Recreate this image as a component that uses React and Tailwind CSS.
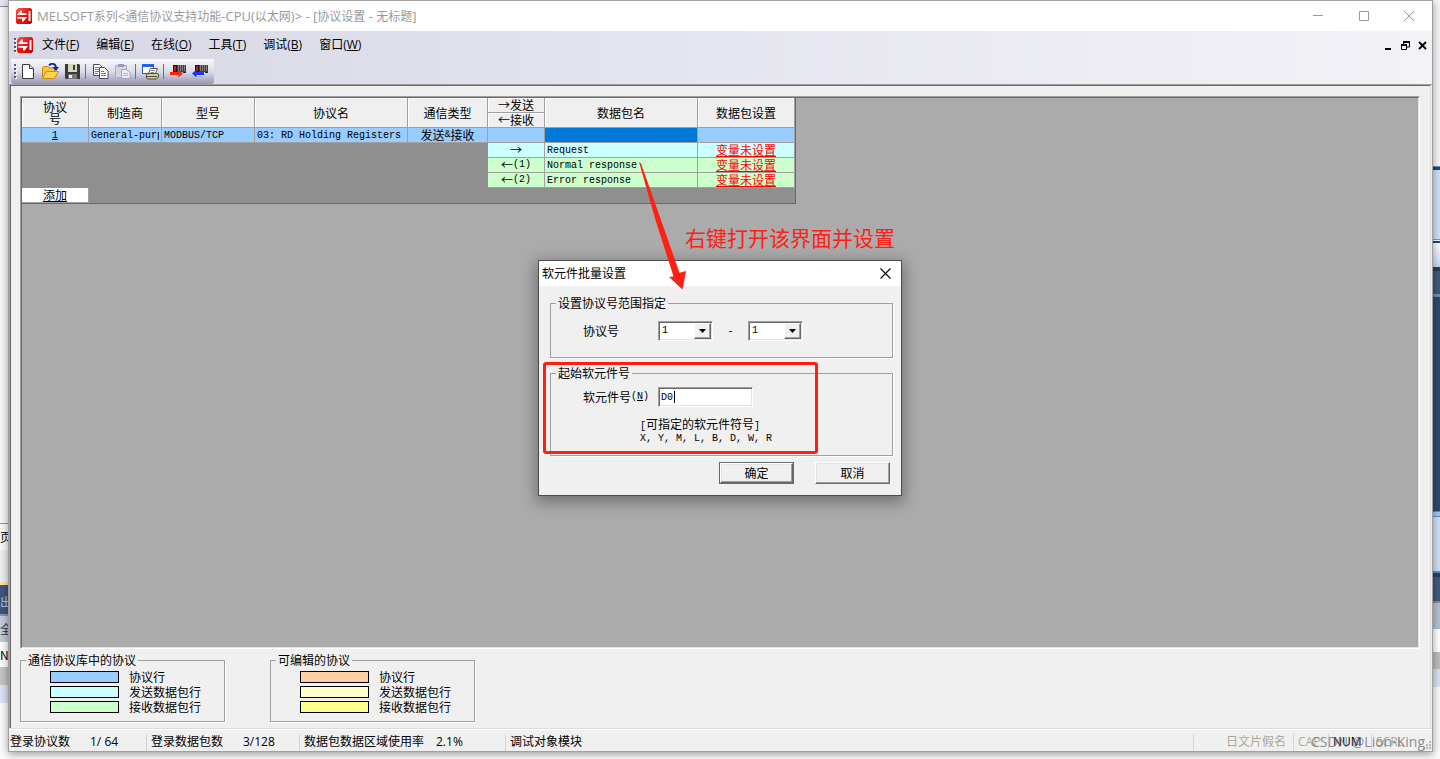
import React from "react";

const UI = "font-['Open_Sans','Noto_Sans_CJK_SC',sans-serif]";
const CJK = "font-['Noto_Sans_CJK_SC',sans-serif]";
const MONO = "font-['Liberation_Mono','Noto_Sans_CJK_SC',monospace] text-[10px]";

function AppIcon() {
  return (
    <svg width="17" height="16" viewBox="0 0 17 16" aria-hidden="true">
      <defs>
        <linearGradient id="appRed" x1="0" y1="0" x2="1" y2="1">
          <stop offset="0" stopColor="#ff5a50" />
          <stop offset="0.5" stopColor="#ee1111" />
          <stop offset="1" stopColor="#b80808" />
        </linearGradient>
      </defs>
      <path d="M2 0H15V1H16V15H15V16H1V15H0V2H1V1H2Z" fill="url(#appRed)" />
      <path d="M1 7L4.500 2.500H6V5.200H10.500V7Z" fill="#fff" />
      <path d="M1.500 9H11L7.500 13.500H6V10.800H1.500Z" fill="#fff" />
      <path d="M12.500 3H14.500V13H12.500Z" fill="#fff" />
    </svg>
  );
}

function Grip() {
  return (
    <svg width="3" height="15" viewBox="0 0 3 15" aria-hidden="true" className="shrink-0">
      {[0, 4, 8, 12].map((y) => (
        <g key={y}>
          <rect x="1" y={y + 1} width="2" height="2" fill="#fff" />
          <rect x="0" y={y} width="2" height="2" fill="#55547a" />
        </g>
      ))}
    </svg>
  );
}

const svgProps = { width: 17, height: 17, viewBox: "0 0 17 17", "aria-hidden": true };

const NewIcon = () => (
  <svg {...svgProps}>
    <path d="M2.500 1.500H9.500L13.500 5.500V15.500H2.500Z" fill="#fff" stroke="#3c3c3c" />
    <path d="M9.500 1.500V5.500H13.500" fill="#ddd" stroke="#3c3c3c" />
  </svg>
);
const OpenIcon = () => (
  <svg {...svgProps}>
    <path d="M0.5 14.5V4.5L1.5 3.5H5.5L7 5H12.5V8" fill="#f4c63c" stroke="#c48a0c" />
    <path d="M0.5 15.5L4 8.5H16.5L12.5 15.5Z" fill="#ffd34e" stroke="#c98d10" />
    <path d="M7 2.5C9 0 13 0 14 4" fill="none" stroke="#0c2ca0" strokeWidth="2" />
    <path d="M10.5 4H17L14 8Z" fill="#0c2ca0" />
  </svg>
);
const SaveIcon = () => (
  <svg {...svgProps}>
    <path d="M1 1H15L16 2V16H2L1 15Z" fill="#3a3a3a" />
    <rect x="4" y="1" width="9" height="8" fill="#d9d7c0" />
    <rect x="9" y="2" width="2" height="5" fill="#3a3a3a" />
    <rect x="4" y="11" width="9" height="5" fill="#777" />
    <rect x="5" y="12" width="3" height="3" fill="#eee" />
  </svg>
);
const CopyIcon = () => (
  <svg {...svgProps}>
    <path d="M1.5 1.5H7.5L10.5 4.5V12.5H1.5Z" fill="#fff" stroke="#4a4a5a" />
    <path d="M3 4.5H7M3 6.5H7M3 8.5H7M3 10.5H6" stroke="#777" />
    <path d="M7.5 4.5H12.5L16 8V15.5H7.5Z" fill="#fff" stroke="#4a4a5a" />
    <path d="M9 8.5H12M9 10.5H14M9 12.5H14" stroke="#777" />
  </svg>
);
const PasteIcon = () => (
  <svg {...svgProps}>
    <path d="M1.5 2.5H12.5V14.5H1.5Z" fill="#d4d4e2" stroke="#a9a9c0" />
    <rect x="4" y="1" width="6" height="3" fill="#9c9cb6" />
    <path d="M7.5 6.5H12.5L16 9.5V15.5H7.5Z" fill="#ececf4" stroke="#a2a2bc" />
    <path d="M9 10.5H14M9 12.5H14" stroke="#b4b4c8" />
  </svg>
);
const PrintIcon = () => (
  <svg {...svgProps}>
    <path d="M0.5 1.5H11.5V10.5H0.5Z" fill="#fff" stroke="#2457b8" />
    <rect x="0" y="1" width="12" height="3" fill="#1d66e0" />
    <path d="M8.500 5.500H15.500L13 11.500H6Z" fill="#fff" stroke="#555" />
    <path d="M9 7.500H13M8.500 9.500H12" stroke="#888" />
    <path d="M4.500 11.500L6 10.500H14.500L16.500 11V14L14.500 16H5.500L4.500 15Z" fill="#d2c99a" stroke="#55513c" />
    <path d="M5 13.500H15" stroke="#55513c" />
  </svg>
);
function TransferIcon({ read }) {
  return (
    <svg {...svgProps}>
      <rect x="3" y="2" width="13" height="7" fill="#463c3c" />
      <rect x="3" y="2" width="4" height="7" fill="#1c1212" />
      <rect x="4" y="3" width="2" height="5" fill="#c81818" />
      <path d="M8.500 2V8M10.500 2V8M12.500 2V8M14.500 2V8" stroke="#857c7c" />
      <path d="M13 9H16V10H13Z" fill="#2c2424" />
      {read ? (
        <path d="M0 10.500L4.500 6.500V9H12V12H4.500V14.500Z" fill="#1438ff" />
      ) : (
        <path d="M13 10.500L8.500 6.500V9H0V12H8.500V14.500Z" fill="#ff2414" />
      )}
    </svg>
  );
}

const tools = [
  ["新建", NewIcon],
  ["打开", OpenIcon],
  ["保存", SaveIcon],
  null,
  ["复制", CopyIcon],
  ["粘贴", PasteIcon],
  null,
  ["打印", PrintIcon],
  null,
  ["写入", () => <TransferIcon />],
  ["读取", () => <TransferIcon read />],
];

const menus = [
  ["文件", "F"],
  ["编辑", "E"],
  ["在线", "O"],
  ["工具", "T"],
  ["调试", "B"],
  ["窗口", "W"],
];

function Strip({ parts, className }) {
  return (
    <div className={`flex shrink-0 flex-col overflow-hidden ${className}`} aria-hidden="true">
      {parts.map(([cls, text], i) => (
        <div key={i} className={`shrink-0 overflow-hidden whitespace-nowrap text-[12px] ${cls}`}>
          {text}
        </div>
      ))}
    </div>
  );
}

const leftParts = [
  ["h-1.5 bg-[#e4e4ee]"],
  ["h-px bg-[#8a8a98]"],
  ["h-[516px] bg-[#f7f7f7]"],
  ["h-px bg-[#8e93a8]"],
  ["h-[26px] bg-[#fafafa] leading-[26px]", "页"],
  ["h-8 bg-[#efefef]"],
  ["h-[3px] bg-[#ffe49a]"],
  ["h-[29px] bg-[#40557c] leading-[34px] text-[#a8c8f4]", "出"],
  ["h-[2px] bg-[#8c94a4]"],
  ["h-[26px] bg-[#c0cbdd] leading-[26px] text-[#333]", "全"],
  ["h-[25px] bg-white leading-[25px]", "No"],
  ["h-[18px] bg-[#c4c4c4]"],
  ["h-[18px] bg-[#dde3f8]"],
  ["h-14 bg-[#fcfcfc]"],
];
const rightParts = [
  ["h-[166px] bg-[#f6f6f6]"],
  ["h-1 bg-[#2e4469] border-t border-[#5b94d8]"],
  ["h-[69px] bg-[#cfe0f6]"],
  ["h-px bg-[#6c9cd4]"],
  ["h-px bg-white"],
  ["h-[2px] bg-[#0c46a8]"],
  ["h-[24px] bg-linear-to-b from-white to-[#c4d8f4]"],
  ["h-[27px] bg-[#43587e] border-t-4 border-[#2b3c5c]"],
  ["h-[2px] bg-[#8d8d8d]"],
  ["h-[215px] bg-[#314870] border-t border-[#5b8ccc]"],
  ["h-[6px] bg-[#9fc6f8] border-y border-[#5b8ccc]"],
  ["h-[54px] bg-[#cfe0f6]"],
  ["h-[2px] bg-[#5b8ccc]"],
  ["h-[28px] bg-[#43587e] border-t-4 border-[#2b3c5c]"],
  ["h-[2px] bg-[#8d8d8d]"],
  ["h-[26px] bg-[#b4c0d4]"],
  ["h-[23px] bg-white"],
  ["h-[17px] bg-[#bdbdbd]"],
  ["h-[18px] bg-[#d8e0f6]"],
  ["h-[72px] bg-[#fafafa]"],
];

const th =
  "border-b border-r border-[#a0a0a0] bg-[#efefef] p-0 text-center align-middle font-normal text-[12px] shadow-[inset_1px_1px_0_#fff]";
const cell = "h-[15px] border-b border-r border-[#a0a0a0] p-0 align-middle overflow-hidden whitespace-nowrap";
const mono = `${MONO} block h-[14px] overflow-hidden leading-[16px]`;

function PacketRow({ arrow, index, name, tone }) {
  return (
    <tr>
      <td colSpan={5} className="p-0" />
      <td className={`${cell} ${tone} text-center`}>
        <span className="flex h-[14px] items-center justify-center leading-[14px]">
          {arrow}
          <span className={MONO}>{index}</span>
        </span>
      </td>
      <td className={`${cell} ${tone} pl-[2px]`}>
        <span className={mono}>{name}</span>
      </td>
      <td className={`${cell} ${tone} text-center`}>
        <a href="#variables" className="block h-[14px] leading-[14px] text-[#ff0000] underline">
          变量未设置
        </a>
      </td>
    </tr>
  );
}

function ProtocolTable() {
  return (
    <table className="w-[774px] table-fixed border-separate border-spacing-0 border-b border-r border-[#696969] bg-[#8f8f8f] text-[12px] leading-[14px]">
      <colgroup>
        <col className="w-[67px]" />
        <col className="w-[73px]" />
        <col className="w-[93px]" />
        <col className="w-[153px]" />
        <col className="w-[80px]" />
        <col className="w-[57px]" />
        <col className="w-[153px]" />
        <col />
      </colgroup>
      <thead>
        <tr>
          <th rowSpan={2} className={`${th} leading-[12px]`}>
            协议
            <br />号
          </th>
          <th rowSpan={2} className={th}>制造商</th>
          <th rowSpan={2} className={th}>型号</th>
          <th rowSpan={2} className={th}>协议名</th>
          <th rowSpan={2} className={th}>通信类型</th>
          <th className={`${th} h-[15px]`}>→发送</th>
          <th rowSpan={2} className={th}>数据包名</th>
          <th rowSpan={2} className={th}>数据包设置</th>
        </tr>
        <tr>
          <th className={`${th} h-[15px]`}>←接收</th>
        </tr>
      </thead>
      <tbody>
        <tr className="bg-[#99ccff]">
          <td className={`${cell} text-center`}>
            <span className={`${mono} underline`}>1</span>
          </td>
          <td className={`${cell} px-[2px]`}>
            <span className={mono}>General-purpose</span>
          </td>
          <td className={`${cell} pl-[2px]`}>
            <span className={mono}>MODBUS/TCP</span>
          </td>
          <td className={`${cell} pl-[2px]`}>
            <span className={mono}>03: RD Holding Registers</span>
          </td>
          <td className={`${cell} text-center`}>
            <span className="flex h-[14px] items-center justify-center">
              发送<span className={MONO}>&amp;</span>接收
            </span>
          </td>
          <td className={cell} />
          <td className={`${cell} bg-[#0078d7]`} />
          <td className={cell} />
        </tr>
        <PacketRow arrow="→" name="Request" tone="bg-[#ccffff]" />
        <PacketRow arrow="←" index="(1)" name="Normal response" tone="bg-[#ccffcc]" />
        <PacketRow arrow="←" index="(2)" name="Error response" tone="bg-[#ccffcc]" />
        <tr>
          <td className={`${cell} bg-white text-center`}>
            <a href="#add" className="block h-[14px] leading-[14px] underline">
              添加
            </a>
          </td>
          <td colSpan={7} className="p-0" />
        </tr>
      </tbody>
    </table>
  );
}

const box = "border border-[#a0a0a0] shadow-[1px_1px_0_#fff] p-0";
const legendCls = "ml-[5px] px-[2px] text-[12px] leading-[12px]";

function LegendGroup({ title, rows }) {
  return (
    <fieldset className={`${box} h-[68px] w-[205px]`}>
      <legend className={legendCls}>{title}</legend>
      <ul className="mt-[3px] pl-[29px]">
        {rows.map(([swatch, label]) => (
          <li key={label} className="flex h-[15px] items-center gap-2.5 text-[12px] leading-[15px]">
            <span className={`h-3 w-[69px] border border-black ${swatch}`} />
            {label}
          </li>
        ))}
      </ul>
    </fieldset>
  );
}

const sunken =
  "border border-t-[#a0a0a0] border-l-[#a0a0a0] border-r-white border-b-white bg-white shadow-[inset_1px_1px_0_#696969,inset_-1px_-1px_0_#e3e3e3]";

function NumberSelect({ id, label }) {
  return (
    <span className={`relative block h-5 w-[55px] ${sunken}`}>
      <select
        id={id}
        aria-label={label}
        defaultValue="1"
        className={`${MONO} block h-full w-full appearance-none bg-transparent pl-[3px] leading-[18px] outline-none`}
      >
        <option>1</option>
      </select>
      <span className="pointer-events-none absolute top-px right-px flex h-4 w-[17px] items-center justify-center border border-t-white border-l-white border-r-[#696969] border-b-[#696969] bg-[#f0f0f0] shadow-[inset_-1px_-1px_0_#a0a0a0]">
        <svg width="7" height="4" viewBox="0 0 7 4" aria-hidden="true">
          <path d="M0 0H7L3.5 4Z" />
        </svg>
      </span>
    </span>
  );
}

const raised =
  "border border-t-white border-l-white border-r-[#696969] border-b-[#696969] bg-[#f0f0f0] shadow-[inset_-1px_-1px_0_#a0a0a0,inset_1px_1px_0_#e3e3e3]";

function DeviceDialog() {
  return (
    <section
      role="dialog"
      aria-label="软元件批量设置"
      className={`absolute top-[260px] left-[538px] z-20 w-[364px] border border-[#4c4c4c] bg-[#f0f0f0] pb-[11px] text-[12px] shadow-[0_4px_14px_2px_rgba(0,0,0,0.35)] ${CJK}`}
    >
      <header className="flex h-[25px] items-center justify-between bg-white pr-[9px] pl-[3px]">
        <h2 className="pb-[2px] leading-[14px]">软元件批量设置</h2>
        <button aria-label="关闭" className="p-px">
          <svg width="11" height="11" viewBox="0 0 11 11" aria-hidden="true">
            <path d="M0.5 0.5L10.5 10.5M10.5 0.5L0.5 10.5" stroke="#000" strokeWidth="1.1" />
          </svg>
        </button>
      </header>
      <form className="mt-[11px] pr-2 pl-[11px]" onSubmit={(e) => e.preventDefault()}>
        <fieldset className={`${box} h-[61px]`}>
          <legend className={legendCls}>设置协议号范围指定</legend>
          <div className="mt-3 flex items-center pl-8">
            <label htmlFor="from" className="w-[75px] leading-[14px]">协议号</label>
            <NumberSelect id="from" label="起始协议号" />
            <span className={`${MONO} w-[35px] text-center`}>-</span>
            <NumberSelect id="to" label="结束协议号" />
          </div>
        </fieldset>
        <fieldset className={`${box} mt-[9px] h-[89px]`}>
          <legend className={legendCls}>起始软元件号</legend>
          <div className="mt-2 flex items-center pl-8">
            <label htmlFor="device" className="flex w-[75px] items-center leading-[14px]">
              软元件号
              <span className={MONO}>
                (<u>N</u>)
              </span>
            </label>
            <span className={`relative block h-5 w-[95px] ${sunken}`}>
              <input
                id="device"
                defaultValue="D0"
                className={`${MONO} block h-full w-full bg-transparent pl-[2px] outline-none`}
              />
              <span className="absolute top-[3px] left-[15px] h-3 w-px bg-black" />
            </span>
          </div>
          <p className="mt-2.5 pl-[89px] leading-[13px]">
            <span className={MONO}>[</span>可指定的软元件符号<span className={MONO}>]</span>
          </p>
          <p className={`${MONO} pl-[89px] leading-[11px]`}>X, Y, M, L, B, D, W, R</p>
        </fieldset>
        <div className="mt-1.5 flex justify-end gap-[21px] pr-[3px]">
          <button type="submit" className="h-[22px] w-[75px] border border-[#696969]">
            <span className={`flex h-full items-center justify-center leading-[14px] ${raised}`}>确定</span>
          </button>
          <button type="button" className={`h-[22px] w-[75px] leading-[14px] ${raised}`}>
            取消
          </button>
        </div>
      </form>
    </section>
  );
}

function Annotations() {
  return (
    <div className="pointer-events-none absolute inset-0 z-30">
      <svg className="absolute top-0 left-0" width="1000" height="500" viewBox="0 0 1000 500" aria-hidden="true">
        <path d="M639 162L641 163.500L661 220L679.500 272.800L686 271L682.500 289.500L669 277L673.500 276.500L655.500 220Z" fill="#ff2015" />
      </svg>
      <p className="absolute top-[224px] left-[685px] text-[21px] leading-[26px] text-[#ff2015]">
        右键打开该界面并设置
      </p>
      <div className="absolute top-[362px] left-[543px] h-[92px] w-[275px] rounded-[3px] border-3 border-[#ff2015]" />
      <p className="absolute right-[15px] bottom-[7px] font-['Open_Sans',sans-serif] text-[14px] leading-[20px] text-[#707070]/80">
        CSDN @Lion-King
      </p>
    </div>
  );
}

const pane = "flex items-center border-[#d4d4d4] h-[17px]";

export default function App() {
  return (
    <div className={`relative flex h-screen overflow-hidden bg-[#fafafa] text-black ${CJK}`}>
      <Strip parts={leftParts} className="w-2" />
      <div className="relative z-10 mb-[7px] flex min-w-0 flex-1 flex-col border border-l border-[#a0a0a0] bg-[#f0f0f0] shadow-[0_2px_8px_rgba(0,0,0,0.4)]">
        <header className={`flex h-[30px] shrink-0 items-center bg-white pl-[7px] ${UI}`}>
          <AppIcon />
          <h1 className="ml-1 flex-1 text-[13px] leading-[16px] text-[#999]">
            MELSOFT<span className="text-[12px]">系列</span>&lt;
            <span className="text-[12px]">通信协议支持功能</span>-CPU(
            <span className="text-[12px]">以太网</span>)&gt; - [<span className="text-[12px]">协议设置</span> -{" "}
            <span className="text-[12px]">无标题</span>]
          </h1>
          <button aria-label="最小化" className="flex h-full w-[46px] items-center justify-center">
            <svg width="10" height="10" viewBox="0 0 10 10"><path d="M0 4.500H10" stroke="#999" /></svg>
          </button>
          <button aria-label="最大化" className="flex h-full w-[45px] items-center justify-center">
            <svg width="10" height="10" viewBox="0 0 10 10"><path d="M0.5 0.5H9.5V9.5H0.5Z" fill="none" stroke="#999" /></svg>
          </button>
          <button aria-label="关闭窗口" className="flex h-full w-[46px] items-center justify-center">
            <svg width="10" height="10" viewBox="0 0 10 10"><path d="M0 0L10 10M10 0L0 10" stroke="#999" /></svg>
          </button>
        </header>

        <div className="h-[53px] shrink-0 bg-linear-to-r from-[#d7d7e5] via-[#e6e6f0] to-[#f3f2f7]">
          <nav className={`flex h-7 items-center pl-[5px] ${UI}`}>
            <Grip />
            <AppIcon />
            <div className="ml-2 flex flex-1 gap-[17px] text-[12px] leading-[16px]">
              {menus.map(([name, key]) => (
                <button key={key}>
                  {name}(<u>{key}</u>)
                </button>
              ))}
            </div>
            <div className="flex items-center gap-2 pr-[5px]">
              <button aria-label="最小化文档">
                <svg width="9" height="9" viewBox="0 0 9 9"><path d="M1 7H7V9H1Z" /></svg>
              </button>
              <button aria-label="还原文档">
                <svg width="9" height="9" viewBox="0 0 9 9">
                  <path d="M2.500 3V1H8.500V6H6" fill="none" stroke="#000" />
                  <path d="M2 0H9V2H2ZM0 3H6V5H0Z" />
                  <path d="M0.500 3.500H5.500V8.500H0.500Z" fill="none" stroke="#000" />
                </svg>
              </button>
              <button aria-label="关闭文档">
                <svg width="9" height="9" viewBox="0 0 9 9"><path d="M1 1L8 8M8 1L1 8" stroke="#000" strokeWidth="1.800" /></svg>
              </button>
            </div>
          </nav>
          <div className="ml-[2px] flex h-[25px] w-fit items-center rounded-b-[3px] bg-linear-to-b from-[#f8f8fc] via-[#dcdce9] to-[#9897b8] pr-[3px] pl-[3px]">
            <Grip />
            <div className="flex items-center">
              {tools.map((tool, i) => {
                if (!tool) return <span key={i} className="mr-[3px] ml-[2px] h-[15px] w-px bg-[#6e6d92]" />;
                const [label, Icon] = tool;
                return (
                  <button key={i} aria-label={label} className="flex w-[22px] justify-center">
                    <Icon />
                  </button>
                );
              })}
            </div>
          </div>
        </div>

        <main className="flex min-h-0 flex-1 flex-col border-t border-l border-[#a0a0a0] pr-px">
          <div className="flex min-h-0 flex-1 flex-col border-t border-r border-l border-t-[#696969] border-r-[#e3e3e3] border-l-[#696969] pt-2.5 pr-[10px] pb-[7px] pl-[9px]">
            <div className="min-h-0 flex-1 border border-t-[#a0a0a0] border-l-[#a0a0a0] border-r-white border-b-white">
              <div className="h-full border border-t-[#696969] border-l-[#696969] border-r-[#e3e3e3] border-b-[#e3e3e3] bg-[#ababab]">
                <ProtocolTable />
              </div>
            </div>
            <div className="mt-[5px] flex gap-[45px]">
              <LegendGroup
                title="通信协议库中的协议"
                rows={[
                  ["bg-[#99ccff]", "协议行"],
                  ["bg-[#ccffff]", "发送数据包行"],
                  ["bg-[#ccffcc]", "接收数据包行"],
                ]}
              />
              <LegendGroup
                title="可编辑的协议"
                rows={[
                  ["bg-[#ffcfa5]", "协议行"],
                  ["bg-[#ffffcc]", "发送数据包行"],
                  ["bg-[#ffff8c]", "接收数据包行"],
                ]}
              />
            </div>
          </div>
        </main>

        <footer className={`flex h-[22px] shrink-0 items-center border-t border-white pt-[3px] text-[12px] leading-[16px] whitespace-nowrap shadow-[0_-1px_0_#dcdcdc] ${UI}`}>
          <div className={`${pane} w-[138px] border-r pl-px`}>
            <span className="w-20">登录协议数</span>
            <span>1/ 64</span>
          </div>
          <div className={`${pane} w-[153px] border-r pl-1`}>
            <span className="w-[92px]">登录数据包数</span>
            <span>3/128</span>
          </div>
          <div className={`${pane} w-[206px] border-r pl-1`}>
            <span className="w-[132px]">数据包数据区域使用率</span>
            <span>2.1%</span>
          </div>
          <div className={`${pane} flex-1 border-r pl-1`}>调试对象模块</div>
          <div className={`${pane} w-[100px] justify-end border-r pr-[7px] text-[#aca899]`}>日文片假名</div>
          <div className={`${pane} w-[35px] border-r pl-1 text-[#aca899]`}>CAP</div>
          <div className={`${pane} w-[43px] border-r pl-1`}>NUM</div>
          <div className={`${pane} w-[60px] pl-1 text-[#aca899]`}>
            <span className="flex-1">SCRL</span>
            <svg width="10" height="10" viewBox="0 0 10 10" className="self-end" aria-hidden="true">
              <path d="M7 0H9V2H7ZM4 3H6V5H4ZM7 3H9V5H7ZM1 6H3V8H1ZM4 6H6V8H4ZM7 6H9V8H7Z" fill="#b8b8b8" />
            </svg>
          </div>
        </footer>
      </div>
      <Strip parts={rightParts} className="w-[7px]" />
      <DeviceDialog />
      <Annotations />
    </div>
  );
}
